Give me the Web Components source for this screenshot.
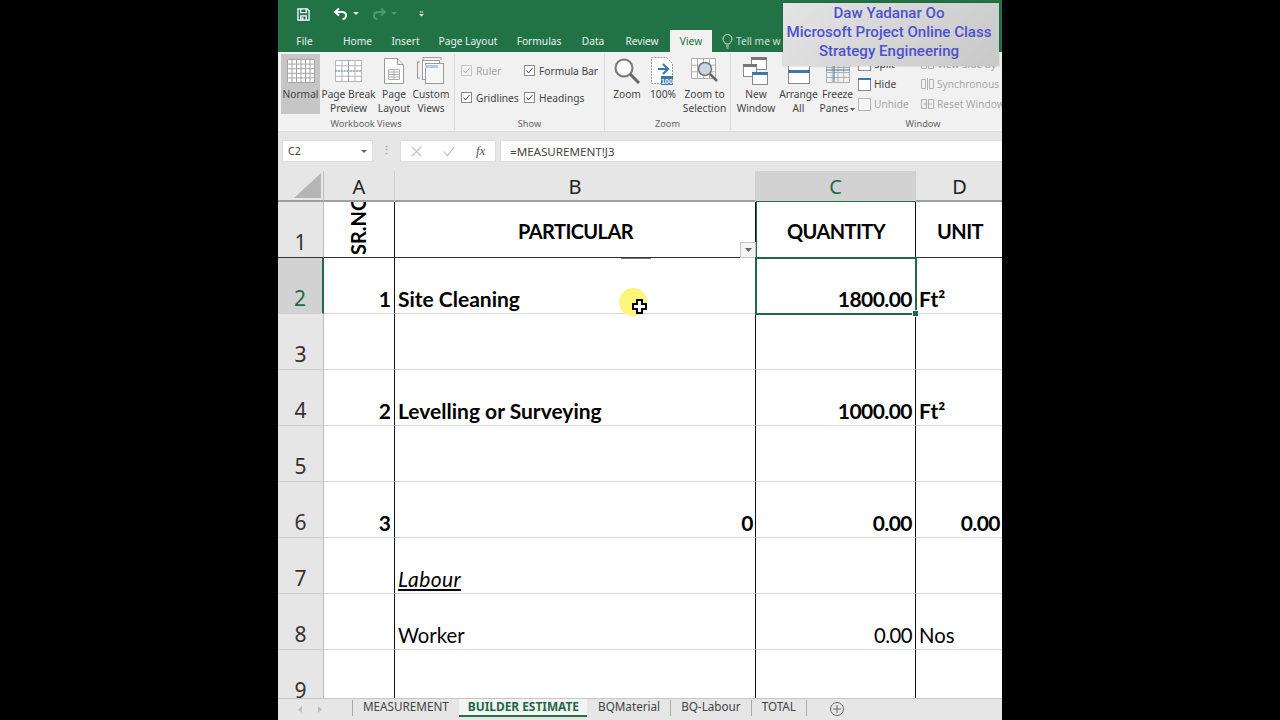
<!DOCTYPE html>
<html>
<head>
<meta charset="utf-8">
<title>Builder Estimate</title>
<style>
  html, body { margin: 0; height: 100%; background: #000; overflow: hidden; }
  body { display: flex; justify-content: center; font-family: "Noto Sans", sans-serif; }
</style>
</head>
<body>
<xl-window>
  <xl-titlebar></xl-titlebar>
  <xl-ribbon></xl-ribbon>
  <xl-formula name="C2" formula="=MEASUREMENT!J3"></xl-formula>
  <xl-sheet></xl-sheet>
  <xl-tabs></xl-tabs>
  <xl-watermark>
    <div>Daw Yadanar Oo</div>
    <div>Microsoft Project Online Class</div>
    <div>Strategy Engineering</div>
  </xl-watermark>
</xl-window>

<script>
// small helper: every element just stamps its markup into an open shadow root
function shadow(el, html) { el.attachShadow({ mode: 'open' }).innerHTML = html; }

class XlWindow extends HTMLElement {
  connectedCallback() {
    shadow(this, `<style>
      :host { display: flex; flex-direction: column; position: relative; width: 724px; height: 720px; background: #e6e6e6; overflow: hidden; flex: none; }
    </style><slot></slot>`);
  }
}

class XlTitlebar extends HTMLElement {
  connectedCallback() {
    // [label, width, gap before]
    const tabs = [['File', 17, 18], ['Home', 29, 30], ['Insert', 25, 21], ['Page Layout', 58, 21], ['Formulas', 42, 21], ['Data', 22, 22], ['Review', 34, 21]];
    shadow(this, `<style>
      :host { display: block; background: #217346; color: #eaf2ee; font: 10.200px/14px "Noto Sans", sans-serif; height: 52px; flex: none; }
      .qat { height: 28px; display: flex; align-items: center; padding-left: 19px; }
      .qat svg { display: block; flex: none; }
      .tabs { height: 22px; margin-top: 2px; display: flex; align-items: stretch; }
      .tab { display: flex; align-items: center; justify-content: center; flex: none; white-space: nowrap; }
      .view { width: 42px; margin-left: 11px; background: #f1f1f1; color: #217346; }
      .tell { margin-left: 10px; display: flex; align-items: center; gap: 3px; white-space: nowrap; color: #cfe0d7; }
    </style>
    <div class="qat">
      <svg width="13" height="13" viewBox="0 0 14 14" fill="none" stroke="#fff" stroke-width="1.400"><path d="M1 1h10l2 2v10H1z"/><path d="M4 1v4h6V1M4 13V8.500h6V13"/><path d="M5 10h2v3H5z" fill="#fff" stroke="none"/></svg>
      <svg style="margin-left:23px" width="16" height="14" viewBox="0 0 16 14" fill="none" stroke="#fff" stroke-width="2"><path d="M6 1.500 2 5l4 3.500"/><path d="M2.500 5H9c3 0 4 2 4 3.500s-1 3.500-3.500 3.500"/></svg>
      <svg style="margin-left:4px" width="6" height="4" viewBox="0 0 6 4"><path d="M0 0h6L3 3z" fill="#dfeee6"/></svg>
      <svg style="margin-left:12px" width="16" height="14" viewBox="0 0 16 14" fill="none" stroke="#4f9871" stroke-width="2"><path d="M10 1.500 14 5l-4 3.500"/><path d="M13.500 5H7C4 5 3 7 3 8.500S4 12 6.500 12"/></svg>
      <svg style="margin-left:4px" width="6" height="4" viewBox="0 0 6 4"><path d="M0 0h6L3 3z" fill="#4f9871"/></svg>
      <svg style="margin-left:22px" width="5" height="7" viewBox="0 0 6 7" fill="#dfeee6"><path d="M1 0h4v1H1zM0 3h6L3 6z"/></svg>
    </div>
    <div class="tabs">
      ${tabs.map(([t, w, m]) => `<div class="tab" style="width:${w}px;margin-left:${m}px">${t}</div>`).join('')}
      <div class="tab view">View</div>
      <div class="tell">
        <svg width="11" height="15" viewBox="0 0 11 15" fill="none" stroke="#d6e6dd" stroke-width="1"><path d="M3.500 10C3 8 1 7.500 1 5a4.500 4.500 0 0 1 9 0c0 2.500-2 3-2.500 5zM4 12h3M4.500 14h2"/></svg>
        <span>Tell me w</span>
      </div>
    </div>`);
  }
}

// one big ribbon button: icon in the slot, label below
class XlRibbonBtn extends HTMLElement {
  connectedCallback() {
    const lines = (this.getAttribute('label') || '').split('|');
    shadow(this, `<style>
      :host { display: flex; flex-direction: column; align-items: center; flex: none; height: 61px; padding-top: 3px; box-sizing: border-box; font: 10.200px/14px "Noto Sans", sans-serif; color: #444; white-space: nowrap; }
      :host([active]) { background: #c6c6c6; }
      .ico { height: 27px; flex: none; display: flex; align-items: center; justify-content: center; margin-bottom: 3px; }
      .caret { display: inline-block; vertical-align: 1px; margin-left: 2px; }
    </style>
    <div class="ico"><slot></slot></div>
    ${lines.map(l => `<div>${l}${this.hasAttribute('caret') && l === lines[lines.length - 1] ? '<svg class="caret" width="5" height="3" viewBox="0 0 5 3"><path d="M0 0h5L2.500 3z" fill="#555"/></svg>' : ''}</div>`).join('')}`);
  }
}

class XlCheck extends HTMLElement {
  connectedCallback() {
    const off = this.hasAttribute('disabled');
    shadow(this, `<style>
      :host { display: flex; align-items: center; gap: 4px; font: 10.200px/14px "Noto Sans", sans-serif; color: ${off ? '#a6a6a6' : '#444'}; white-space: nowrap; }
      svg { display: block; }
    </style>
    <svg width="11" height="11" viewBox="0 0 11 11" fill="${off ? '#f1f1f1' : '#fff'}" stroke="${off ? '#c6c6c6' : '#8a8a8a'}"><rect x=".5" y=".5" width="10" height="10"/><path d="M2.500 5.500 4.500 8 8.500 3" fill="none" stroke="${off ? '#b0b0b0' : '#444'}" stroke-width="1"/></svg>
    <span><slot></slot></span>`);
  }
}

class XlGroup extends HTMLElement {
  connectedCallback() {
    shadow(this, `<style>
      :host { display: flex; flex-direction: column; flex: none; box-sizing: border-box; border-right: 1px solid #d9d9d9; height: 76px; margin-top: 2px; }
      .body { height: 61px; display: flex; overflow: hidden; padding-left: ${this.getAttribute('pad') || 0}px; }
      .name { height: 15px; margin-top: 1px; text-align: center; font: 9.200px/17px "Noto Sans", sans-serif; color: #666; }
    </style>
    <div class="body"><slot></slot></div>
    <div class="name">${this.getAttribute('name')}</div>`);
  }
}

class XlRibbon extends HTMLElement {
  connectedCallback() {
    const gray = '#9a9a9a', blue = '#3d78a8';
    const gridLines = (x, y, w, h, cx, cy, c) => {
      let d = '';
      for (let i = 0; i <= cx; i++) d += `M${x + i * w / cx} ${y}v${h}`;
      for (let i = 0; i <= cy; i++) d += `M${x} ${y + i * h / cy}h${w}`;
      return `<path d="${d}" stroke="${c}" stroke-width="1" fill="none"/>`;
    };
    shadow(this, `<style>
      :host { display: flex; height: 80px; box-sizing: border-box; background: #f1f1f1; border-bottom: 1px solid #dcdcdc; overflow: hidden; flex: none; }
      .show { display: grid; grid-template-columns: 63px auto; grid-template-rows: 27px 27px; align-items: center; padding: 3px 0 0 6px; }
      .col { display: flex; flex-direction: column; gap: 6px; padding-top: 3px; font: 10.200px/14px "Noto Sans", sans-serif; white-space: nowrap; flex: none; }
      .row { display: flex; align-items: center; gap: 3px; height: 14px; }
      .off { color: #a8a8a8; }
      svg { display: block; }
    </style>
    <xl-group name="Workbook Views" pad="3" style="width:177px">
      <xl-ribbon-btn active label="Normal" style="width:39px">
        <svg width="28" height="24" viewBox="0 0 28 24"><rect width="28" height="24" fill="#fff"/>${gridLines(.5, .5, 27, 23, 6, 5, '#a3a3a3')}</svg>
      </xl-ribbon-btn>
      <xl-ribbon-btn label="Page Break|Preview" style="width:53px;margin-left:2px">
        <svg width="27" height="22" viewBox="0 0 27 22"><rect width="27" height="22" fill="#fff"/>${gridLines(.5, .5, 26, 21, 4, 4, '#b5b5b5')}<path d="M13.500 0v22M0 11h27" stroke="#7f9fb8" stroke-dasharray="2 1"/></svg>
      </xl-ribbon-btn>
      <xl-ribbon-btn label="Page|Layout" style="width:32px;margin-left:3px">
        <svg width="20" height="26" viewBox="0 0 20 26" fill="#fff" stroke="${gray}"><path d="M.5.500h13l6 6v19H.5z"/><path d="M13.500.500v6h6" fill="#f1f1f1"/>${gridLines(4.5, 11.5, 11, 10, 2, 4, '#b0b0b0')}</svg>
      </xl-ribbon-btn>
      <xl-ribbon-btn label="Custom|Views" style="width:38px;margin-left:2px">
        <svg width="28" height="27" viewBox="0 0 28 27" fill="none" stroke="${gray}"><path d="M.5 5v16M0 5h3M0 21h3M6 .5h18M6 0v3M24 0v3"/><rect x="5.500" y="3.500" width="17" height="19" fill="#fff"/><rect x="8.500" y="6.500" width="18" height="20" fill="#f7f7f7"/><rect x="8" y="8" width="13" height="3" fill="#b9c9d6" stroke="none"/></svg>
      </xl-ribbon-btn>
    </xl-group>
    <xl-group name="Show" style="width:150px">
      <div class="show">
        <xl-check disabled>Ruler</xl-check><xl-check>Formula Bar</xl-check>
        <xl-check>Gridlines</xl-check><xl-check>Headings</xl-check>
      </div>
    </xl-group>
    <xl-group name="Zoom" pad="6" style="width:126px">
      <xl-ribbon-btn label="Zoom" style="width:32px">
        <svg width="27" height="26" viewBox="0 0 27 26" fill="none"><circle cx="10" cy="10" r="8.500" stroke="#777" stroke-width="2" fill="#fbfbfb"/><path d="M16 16l9 9" stroke="#666" stroke-width="3"/></svg>
      </xl-ribbon-btn>
      <xl-ribbon-btn label="100%" style="width:32px;margin-left:4px">
        <svg width="26" height="28" viewBox="0 0 26 28" fill="#fff"><path d="M1.500.500h15l6 6v20h-21z" stroke="${gray}" stroke-dasharray="2 1"/><path d="M8 12h9M13 7l5 5-5 5" stroke="${blue}" stroke-width="2.200" fill="none"/><rect x="11" y="19" width="12" height="9" fill="${blue}"/><text x="17" y="26.500" font-size="7" font-family="Liberation Sans" font-weight="700" fill="#fff" text-anchor="middle">100</text></svg>
      </xl-ribbon-btn>
      <xl-ribbon-btn label="Zoom to|Selection" style="width:47px;margin-left:2px">
        <svg width="28" height="26" viewBox="0 0 28 26" fill="none"><rect x=".5" y=".5" width="24" height="20" fill="#fff"/>${gridLines(.5, .5, 24, 20, 4, 3, '#aeaeae')}<circle cx="14" cy="11" r="6.500" stroke="#777" stroke-width="1.500" fill="#c9d7e3"/><path d="M19 16l7 7" stroke="#666" stroke-width="2.500"/></svg>
      </xl-ribbon-btn>
    </xl-group>
    <xl-group name="Window" pad="6" style="width:384px;border-right:0">
      <xl-ribbon-btn label="New|Window" style="width:38px">
        <svg width="26" height="28" viewBox="0 0 26 28" fill="#fff" stroke="#888"><rect x="8.500" y=".5" width="15" height="12"/><rect x="8" y="0" width="16" height="3" fill="#777" stroke="none"/><rect x=".5" y="7.500" width="13" height="12"/><rect x="0" y="7" width="14" height="3" fill="#777" stroke="none"/><rect x="9.500" y="15.500" width="15" height="12"/><rect x="9" y="15" width="16" height="3" fill="${blue}" stroke="none"/></svg>
      </xl-ribbon-btn>
      <xl-ribbon-btn label="Arrange|All" style="width:39px;margin-left:4px">
        <svg width="22" height="26" viewBox="0 0 22 26" fill="#fff" stroke="#888"><rect x=".5" y="4.500" width="21" height="21"/><rect x="0" y="12" width="22" height="3" fill="${blue}" stroke="none"/></svg>
      </xl-ribbon-btn>
      <xl-ribbon-btn caret label="Freeze|Panes" style="width:35px;margin-left:2px">
        <svg width="24" height="26" viewBox="0 0 24 26">${gridLines(.5, 4.500, 23, 20, 4, 4, '#b0b0b0')}<path d="M8 4v20M0 12h24" stroke="${blue}"/></svg>
      </xl-ribbon-btn>
      <div class="col" style="margin-left:3px;width:63px;color:#444">
        <div class="row"><svg width="13" height="13" viewBox="0 0 13 13" fill="#fff" stroke="#888"><rect x=".5" y=".5" width="12" height="12"/></svg>Split</div>
        <div class="row"><svg width="13" height="13" viewBox="0 0 13 13" fill="#fff" stroke="#888"><rect x=".5" y=".5" width="12" height="12"/><rect width="13" height="2" fill="${blue}" stroke="none"/></svg>Hide</div>
        <div class="row off"><svg width="13" height="13" viewBox="0 0 13 13" fill="#f6f6f6" stroke="#b5b5b5"><rect x=".5" y=".5" width="12" height="12"/></svg>Unhide</div>
      </div>
      <div class="col off">
        <div class="row"><svg width="13" height="12" viewBox="0 0 13 12" fill="none" stroke="#b0b0b0"><path d="M.5 1.500h5v9h-5zM7.500 1.500h5v9h-5z"/></svg>View Side by</div>
        <div class="row"><svg width="13" height="12" viewBox="0 0 13 12" fill="none" stroke="#b0b0b0"><path d="M.5 1.500h4v9h-4zM8.500 1.500h4v9h-4zM6.500 0v12"/></svg>Synchronous</div>
        <div class="row"><svg width="13" height="12" viewBox="0 0 13 12" fill="none" stroke="#b0b0b0"><path d="M.5 1.500h5v9h-5zM7.500 1.500h5v9h-5zM2 6h3M11 6H8"/></svg>Reset Window</div>
      </div>
    </xl-group>`);
  }
}

class XlFormula extends HTMLElement {
  connectedCallback() {
    shadow(this, `<style>
      :host { display: flex; align-items: stretch; height: 22px; margin: 8px 0 9px; padding-left: 4px; font: 10.500px/21px "Noto Sans", sans-serif; color: #444; flex: none; }
      .name { width: 91px; background: #fff; border: 1px solid #dedede; box-sizing: border-box; padding-left: 5px; position: relative; }
      .name svg { position: absolute; right: 5px; top: 9px; }
      .dots { width: 27px; text-align: center; color: #aaa; line-height: 20px; font-weight: 700; }
      .btns { width: 96px; background: #fff; border: 1px solid #dedede; box-sizing: border-box; display: flex; align-items: center; padding-left: 10px; }
      .fx { font: italic 13px "Liberation Serif", serif; color: #555; margin-left: 21px; }
      .ok { margin-left: 21px; }
      .input { flex: 1; margin-left: 4px; background: #fff; border: 1px solid #dedede; border-right: 0; box-sizing: border-box; padding-left: 9px; font-size: 11.600px; }
    </style>
    <div class="name">${this.getAttribute('name')}<svg width="6" height="4" viewBox="0 0 6 4"><path d="M0 0h6L3 3z" fill="#666"/></svg></div>
    <div class="dots">⋮</div>
    <div class="btns">
      <svg width="11" height="11" viewBox="0 0 12 12" stroke="#bdbdbd" stroke-width="1.300"><path d="M1 1l10 10M11 1 1 11"/></svg>
      <svg class="ok" width="12" height="11" viewBox="0 0 14 12" stroke="#bdbdbd" stroke-width="1.300" fill="none"><path d="M1 6l4 5 8-10"/></svg>
      <span class="fx">fx</span>
    </div>
    <div class="input">${this.getAttribute('formula')}</div>`);
  }
}

class XlSheet extends HTMLElement {
  connectedCallback() {
    // row: [number, A, B, C, D, bold, numeric B and D]
    const rows = [
      ['2', '1', 'Site Cleaning', '1800.00', 'Ft²', 1],
      ['3', '', '', '', ''],
      ['4', '2', 'Levelling or Surveying', '1000.00', 'Ft²', 1],
      ['5', '', '', '', ''],
      ['6', '3', '0', '0.00', '0.00', 1, 1],
      ['7', '', '<u><i class="lab">Labour</i></u>', '', ''],
      ['8', '', 'Worker', '0.00', 'Nos'],
      ['9', '', '', '', '']
    ];
    const body = rows.map(([n, a, b, c, d, isBold, nums]) => {
      const w = isBold ? 'font-weight:700;' : 'font-size:20.300px;';
      return `<div class="rh ${n === '2' ? 'hl' : ''}">${n}</div>
        <div class="c a" style="${w}">${a}</div>
        <div class="c b ${nums ? 'num' : ''}" style="${w}">${b}</div>
        <div class="c cc num ${n === '2' ? 'sel' : ''}" style="${w}">${c}${n === '2' ? '<i class="handle"></i>' : ''}</div>
        <div class="c d ${nums ? 'num' : ''}" style="${w}">${d}</div>`;
    }).join('');
    shadow(this, `<style>
      :host { display: block; flex: 1; min-height: 0; overflow: hidden; position: relative; background: #fff; }
      .grid { display: grid; grid-template-columns: 46px 71px 361px 160px 87px; grid-template-rows: 31px repeat(9, 56px); font: 21px/24px Lato, sans-serif; color: #000; }
      .ch { background: #e6e6e6; border-bottom: 2px solid #9e9e9e; box-sizing: border-box; text-align: center; font: 20px/31px "Noto Sans", sans-serif; color: #222; border-right: 1px solid #cfcfcf; }
      .ch.hl { background: #d2d2d2; color: #1d6b45; border-bottom: 1px solid #1d6b45; }
      .corner { background: #e6e6e6; border-bottom: 2px solid #9e9e9e; border-right: 1px solid #bdbdbd; box-sizing: border-box; display: flex; align-items: flex-end; justify-content: flex-end; padding: 0 2px 2px 0; }
      .rh { background: #e6e6e6; border-bottom: 1px solid #cfcfcf; border-right: 1px solid #bdbdbd; box-sizing: border-box; text-align: center; font: 21px/24px "Noto Sans", sans-serif; color: #333; padding-top: 28px; }
      .rh.hl { background: #d2d2d2; color: #1d6b45; border-right: 2px solid #1d6b45; }
      .c { border-bottom: 1px solid #d6d6d6; border-right: 1px solid #111; box-sizing: border-box; padding: 29px 2px 0 3px; white-space: nowrap; overflow: hidden; }
      .a { text-align: right; padding-right: 3px; }
      .cc { position: relative; overflow: visible; }
      .num { text-align: right; letter-spacing: -.55px; }
      .cc.num, .d.num { padding-right: 3px; }
      .d { border-right: 0; overflow: visible; }
      .lab { font-size: 21px; letter-spacing: .4px; }
      .head { font-size: 20px; font-weight: 700; text-align: center; padding-top: 17px; border-bottom: 1px solid #333; letter-spacing: -.6px; }
      .head.a { padding: 0; display: flex; justify-content: center; align-items: flex-end; overflow: hidden; text-align: left; }
      .vert { writing-mode: vertical-rl; transform: rotate(180deg); font-size: 20px; line-height: 22px; padding-top: 2px; margin-right: 2px; white-space: nowrap; height: 53px; letter-spacing: 0; }
      .head.q { box-shadow: inset 1px 0 0 #1d6b45; }
      .sel { outline: 2px solid #1d6b45; outline-offset: -1px; z-index: 2; }
      .handle { position: absolute; right: -3px; bottom: -3px; width: 5px; height: 5px; background: #1d6b45; border: 1px solid #fff; margin: -1px; }
      .filter { position: absolute; left: 462px; top: 71px; width: 16px; height: 16px; background: #f4f4f4; border: 1px solid #c4c4c4; box-sizing: border-box; display: flex; align-items: center; justify-content: center; }
      .smudge { position: absolute; left: 343px; top: 87px; width: 30px; height: 1px; background: #777; }
      .cursor { position: absolute; left: 341px; top: 117px; width: 28px; height: 28px; border-radius: 50%; background: #fbf57a; }
      .plus { position: absolute; left: 354px; top: 128px; }
    </style>
    <div class="grid">
      <div class="corner"><svg width="27" height="25" viewBox="0 0 27 25"><path d="M27 0v25H0z" fill="#b5b5b5"/></svg></div>
      <div class="ch">A</div><div class="ch">B</div><div class="ch hl">C</div><div class="ch" style="border-right:0">D</div>
      <div class="rh" style="border-bottom-color:#333">1</div>
      <div class="c a head"><span class="vert">SR.NO</span></div>
      <div class="c b head">PARTICULAR</div>
      <div class="c cc head q">QUANTITY</div>
      <div class="c d head">UNIT</div>
      ${body}
    </div>
    <div class="filter"><svg width="7" height="4" viewBox="0 0 7 4"><path d="M0 0h7L3.500 4z" fill="#666"/></svg></div>
    <div class="smudge"></div>
    <div class="cursor"></div>
    <svg class="plus" width="15" height="15" viewBox="0 0 15 15"><path d="M5 1h5v4h4v5h-4v4H5v-4H1V5h4z" fill="#fff" stroke="#000" stroke-width="2"/></svg>`);
  }
}

class XlTabs extends HTMLElement {
  connectedCallback() {
    shadow(this, `<style>
      :host { display: flex; align-items: flex-start; height: 22px; flex: none; background: #e6e6e6; border-top: 1px solid #c6c6c6; box-sizing: border-box; font: 11.700px/12px "Noto Sans", sans-serif; color: #444; white-space: nowrap; }
      .nav { width: 74px; height: 20px; display: flex; align-items: center; gap: 14px; padding-left: 20px; box-sizing: border-box; flex: none; }
      .t { border-left: 1px solid #a9a9a9; margin-top: 1px; padding: 0 10px; height: 16px; }
      .on { padding: 0 8px 0 9px; height: 18px; background: #f4f4f4; color: #1d6b45; font-weight: 700; font-size: 11.900px; line-height: 15px; border-bottom: 2px solid #217346; box-sizing: border-box; }
      .after { border-left: 0; padding-left: 11px; }
      .end { border-left: 1px solid #a9a9a9; margin-top: 1px; height: 16px; }
      svg { display: block; }
      .plus { margin: 3px 0 0 23px; flex: none; }
    </style>
    <div class="nav">
      <svg width="5" height="7" viewBox="0 0 5 7"><path d="M4 0 0 3.500 4 7z" fill="#bdbdbd"/></svg>
      <svg width="5" height="7" viewBox="0 0 5 7"><path d="M1 0l4 3.500L1 7z" fill="#bdbdbd"/></svg>
    </div>
    <div class="t">MEASUREMENT</div>
    <div class="on">BUILDER ESTIMATE</div>
    <div class="t after">BQMaterial</div>
    <div class="t">BQ-Labour</div>
    <div class="t">TOTAL</div>
    <div class="end"></div>
    <svg class="plus" width="14" height="14" viewBox="0 0 14 14" fill="none" stroke="#666"><circle cx="7" cy="7" r="6.500"/><path d="M7 3v8M3 7h8"/></svg>`);
  }
}

class XlWatermark extends HTMLElement {
  connectedCallback() {
    shadow(this, `<style>
      :host { position: absolute; left: 505px; top: 3px; width: 216px; height: 63px; box-sizing: border-box; padding: 1px 4px 0 0; background: linear-gradient(135deg, #e4e4e4, #d6d6d6 50%, #c8c8c8); text-align: center; font: 500 15.100px/19.200px Roboto, sans-serif; color: #4e51cf; white-space: nowrap; box-shadow: 0 0 2px rgba(0,0,0,.25); }
    </style><slot></slot>`);
  }
}

customElements.define('xl-window', XlWindow);
customElements.define('xl-titlebar', XlTitlebar);
customElements.define('xl-ribbon-btn', XlRibbonBtn);
customElements.define('xl-check', XlCheck);
customElements.define('xl-group', XlGroup);
customElements.define('xl-ribbon', XlRibbon);
customElements.define('xl-formula', XlFormula);
customElements.define('xl-sheet', XlSheet);
customElements.define('xl-tabs', XlTabs);
customElements.define('xl-watermark', XlWatermark);
</script>
</body>
</html>
